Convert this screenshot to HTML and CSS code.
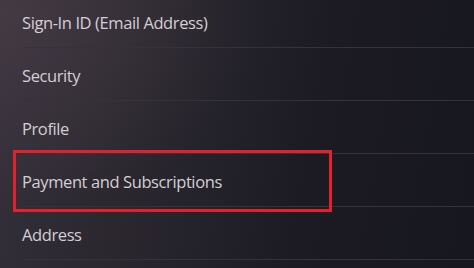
FILE: index.html
```html
<!DOCTYPE html>
<html>
<head>
<meta charset="utf-8">
<link rel="stylesheet" href="styles.css">
</head>
<body>
<div class="screen">
  <ul class="menu">
    <li class="item"><span class="label">Sign-In ID (Email Address)</span></li>
    <li class="item"><span class="label">Security</span></li>
    <li class="item"><span class="label">Profile</span></li>
    <li class="item highlighted"><span class="label">Payment and Subscriptions</span><span class="mark"></span></li>
    <li class="item"><span class="label">Address</span></li>
  </ul>
</div>
</body>
</html>
```
FILE: styles.css
```css
html, body {
  margin: 0;
  padding: 0;
}
body {
  width: 474px;
  height: 268px;
  overflow: hidden;
  background: #222129;
}
.screen {
  width: 474px;
  height: 268px;
  overflow: hidden;
  background:
    radial-gradient(ellipse 260px 200px at 0px 10px, rgba(80,66,76,0.55), rgba(80,66,76,0) 100%),
    linear-gradient(100deg, #35303a 0%, #2a272f 30%, #1c1b24 65%, #17171f 100%);
  font-family: "Open Sans", "Noto Sans", sans-serif;
}
.menu {
  list-style: none;
  margin: -5px 0 0 0;
  padding: 0;
}
.item {
  position: relative;
  height: 52px;
  margin-left: 24px;
  border-bottom: 1px solid #34333d;
  display: flex;
  align-items: center;
}
.label {
  margin-left: -2px;
  margin-top: 3px;
  font-size: 16.5px;
  letter-spacing: -0.4px;
  color: #d3cfd4;
  line-height: 20px;
}
.mark {
  position: absolute;
  left: -11px;
  top: -4px;
  width: 313px;
  height: 56px;
  border: 3px solid #e3202b;
}
```
